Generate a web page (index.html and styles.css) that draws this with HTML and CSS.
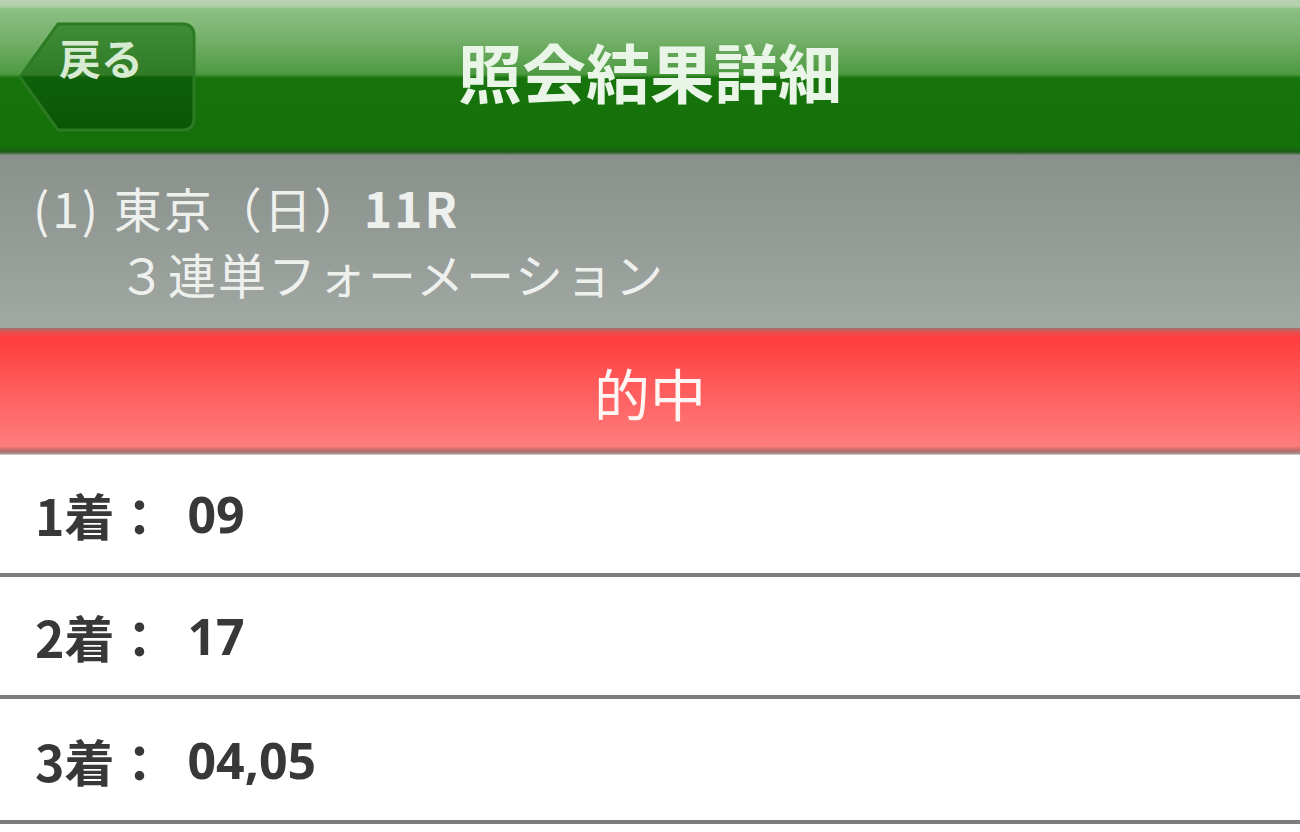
FILE: index.html
```html
<!DOCTYPE html>
<html lang="ja">
<head>
<meta charset="utf-8">
<title>照会結果詳細</title>
<link rel="stylesheet" href="styles.css">
</head>
<body>
<header class="topbar">
  <div class="left">
    <button class="back">
      <svg class="back-shape" viewBox="0 0 178 110" preserveAspectRatio="none">
        <defs>
          <linearGradient id="bg" x1="0" y1="0" x2="0" y2="1">
            <stop offset="0" stop-color="#418c37"/>
            <stop offset="0.48" stop-color="#2f7b26"/>
            <stop offset="0.5" stop-color="#0f600a"/>
            <stop offset="1" stop-color="#0b5606"/>
          </linearGradient>
        </defs>
        <path d="M40 2 H164 Q176 2 176 14 V96 Q176 108 164 108 H40 L2 55 Z" fill="url(#bg)" stroke="#2c7a22" stroke-width="3"/>
      </svg>
      <span class="back-label">戻る</span>
    </button>
  </div>
  <h1 class="title">照会結果詳細</h1>
  <div class="right"></div>
</header>
<section class="race">
  <div class="line1"><span class="race-idx">(1)</span> 東京（日）<b class="race-no">11R</b></div>
  <div class="line2">３連単フォーメーション</div>
</section>
<div class="hit">的中</div>
<ul class="results">
  <li class="row"><span class="pos">1着</span><span class="colon">：</span><span class="num">09</span></li>
  <li class="row"><span class="pos">2着</span><span class="colon">：</span><span class="num">17</span></li>
  <li class="row"><span class="pos">3着</span><span class="colon">：</span><span class="num">04,05</span></li>
</ul>
</body>
</html>
```
FILE: styles.css
```css
html, body {
  margin: 0;
  padding: 0;
  background: #ffffff;
  font-family: "Noto Sans CJK JP", "Noto Sans", "DejaVu Sans", sans-serif;
}

.topbar {
  height: 155px;
  display: grid;
  grid-template-columns: 1fr auto 1fr;
  align-items: start;
  background: linear-gradient(to bottom,
    #b9d2b3 0px, #b5cfae 6px, #8bc083 9px, #74b06a 40px, #4d9a41 74px,
    #17730b 78px, #147009 146px, #1c5f14 152px, #7c877e 155px);
}

.left {
  padding: 22px 0 0 18px;
}

.back {
  position: relative;
  width: 178px;
  height: 110px;
  border: 0;
  padding: 0;
  background: transparent;
  display: flex;
  align-items: flex-start;
}

.back-shape {
  position: absolute;
  inset: 0;
  width: 100%;
  height: 100%;
}

.back-label {
  position: relative;
  margin: 10px 0 0 41px;
  font-family: "Noto Sans CJK JP", sans-serif;
  font-size: 42px;
  font-weight: 700;
  line-height: 1.2;
  color: #d7ead2;
}

.title {
  margin: 0;
  padding-top: 32px;
  font-size: 64px;
  font-weight: 700;
  line-height: 1.2;
  color: #e9f5e6;
  letter-spacing: 0;
}

.race {
  height: 173px;
  box-sizing: border-box;
  padding: 19px 0 0 33px;
  background: linear-gradient(to bottom, #8a918c 0%, #979d99 60%, #a2a8a3 100%);
  color: #eef0ee;
}

.line1 {
  font-size: 48px;
  line-height: 66px;
  letter-spacing: 2px;
  word-spacing: 0;
}

.race-idx {
  letter-spacing: 3px;
}

.race-no {
  font-weight: 600;
}

.line2 {
  padding-left: 85px;
  font-size: 48px;
  line-height: 66px;
  letter-spacing: 2px;
}

.hit {
  height: 127px;
  box-sizing: border-box;
  display: flex;
  align-items: center;
  justify-content: center;
  font-size: 56px;
  color: #fff6f4;
  background: linear-gradient(to bottom,
    #9c7473 0px, #e85050 4px, #ff3d3d 10px, #ff5656 50px, #ff7272 100px,
    #ff7d7d 118px, #c46a6a 122px, #9e7f7f 125px, #d8d8d8 127px);
}

.results {
  list-style: none;
  margin: 0;
  padding: 0;
}

.row {
  height: 122px;
  box-sizing: border-box;
  border-bottom: 4px solid #7d7d7d;
  padding-left: 35px;
  display: flex;
  align-items: center;
  font-size: 50px;
  font-weight: 700;
  color: #383838;
  background: #ffffff;
}

.row:last-child {
  height: 125px;
}

.colon {
  width: 50px;
}

.num {
  margin-left: 23px;
  font-family: "Noto Sans", "DejaVu Sans", sans-serif;
}
```
